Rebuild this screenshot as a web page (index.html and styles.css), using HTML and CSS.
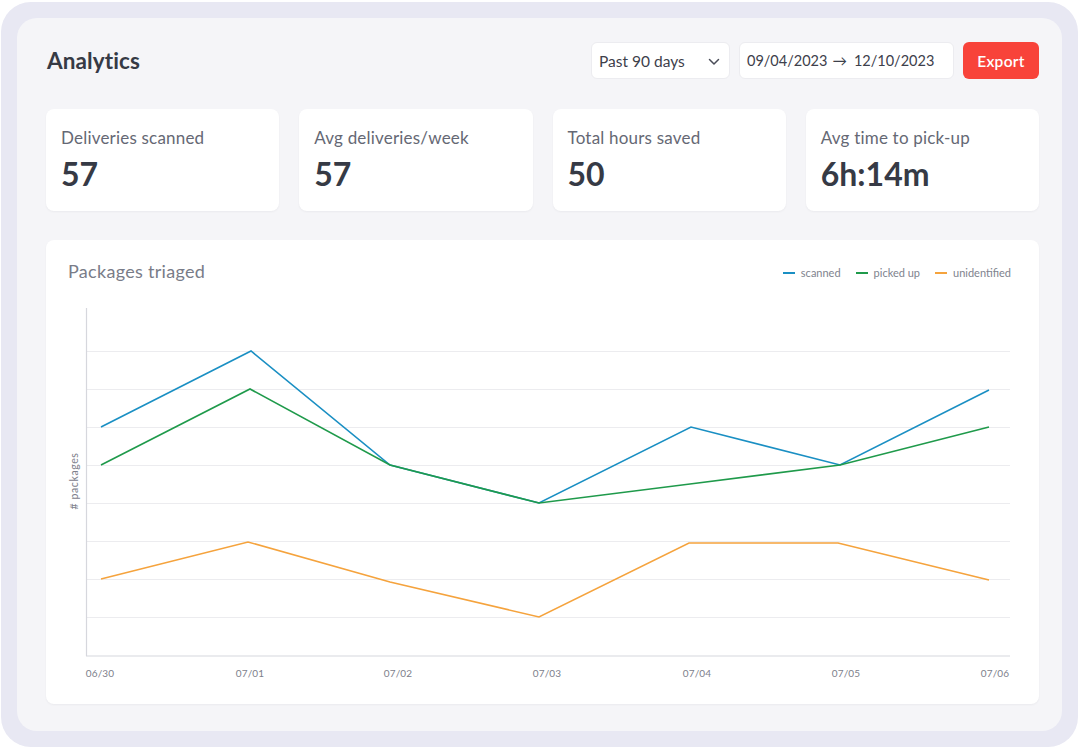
FILE: index.html
```html
<!DOCTYPE html>
<html lang="en">
<head>
<meta charset="utf-8">
<title>Analytics</title>
<link rel="stylesheet" href="styles.css">
</head>
<body>
<div class="frame">
  <div class="panel">
    <header class="top">
      <h1 class="title">Analytics</h1>
      <div class="controls">
        <div class="select">
          <span>Past 90 days</span>
          <svg class="chev" width="12" height="8" viewBox="0 0 12 8"><path d="M1.5 1.5 L6 6 L10.5 1.5" fill="none" stroke="#4a4d58" stroke-width="1.5" stroke-linecap="round" stroke-linejoin="round"/></svg>
        </div>
        <div class="range"><span>09/04/2023</span><span class="arrow">→</span><span>12/10/2023</span></div>
        <button class="export">Export</button>
      </div>
    </header>

    <section class="stats">
      <div class="stat"><div class="label">Deliveries scanned</div><div class="value">57</div></div>
      <div class="stat"><div class="label">Avg deliveries/week</div><div class="value">57</div></div>
      <div class="stat"><div class="label">Total hours saved</div><div class="value">50</div></div>
      <div class="stat"><div class="label">Avg time to pick-up</div><div class="value">6h:14m</div></div>
    </section>

    <section class="chart-card">
      <div class="chart-head">
        <h2 class="chart-title">Packages triaged</h2>
        <ul class="legend">
          <li><i class="sw sw-blue"></i>scanned</li>
          <li><i class="sw sw-green"></i>picked up</li>
          <li><i class="sw sw-orange"></i>unidentified</li>
        </ul>
      </div>
      <svg class="plot" width="992" height="400" viewBox="46 295 992 400">
        <g class="grid" stroke="#ececef" stroke-width="1">
          <line x1="86" y1="351.5" x2="1010" y2="351.5"/>
          <line x1="86" y1="389.5" x2="1010" y2="389.5"/>
          <line x1="86" y1="427.5" x2="1010" y2="427.5"/>
          <line x1="86" y1="465.5" x2="1010" y2="465.5"/>
          <line x1="86" y1="503.5" x2="1010" y2="503.5"/>
          <line x1="86" y1="541.5" x2="1010" y2="541.5"/>
          <line x1="86" y1="579.5" x2="1010" y2="579.5"/>
          <line x1="86" y1="617.5" x2="1010" y2="617.5"/>
        </g>
        <g stroke="#d6d7dd" stroke-width="1.2">
          <line x1="86.5" y1="308" x2="86.5" y2="656"/>
          <line x1="86" y1="656" x2="1010" y2="656"/>
        </g>
        <polyline fill="none" stroke="#1a8fc3" stroke-width="1.6" points="101,427 251,351 390,465 539,503 691,427 840,465 989,390"/>
        <polyline fill="none" stroke="#1f9a4b" stroke-width="1.6" points="101,465 250,389 390,465 539,503 690,484 840,465 989,427"/>
        <polyline fill="none" stroke="#f5a33d" stroke-width="1.6" points="101,579 248,542 390,582 539,617 689,543 838,543 989,580"/>
        <text class="ylab" transform="translate(78 481) rotate(-90)" text-anchor="middle"># packages</text>
        <g class="xlab" text-anchor="middle">
          <text x="100" y="677">06/30</text>
          <text x="250" y="677">07/01</text>
          <text x="398" y="677">07/02</text>
          <text x="547" y="677">07/03</text>
          <text x="697" y="677">07/04</text>
          <text x="846" y="677">07/05</text>
          <text x="995" y="677">07/06</text>
        </g>
      </svg>
    </section>
  </div>
</div>
</body>
</html>
```

FILE: styles.css
```css
* { box-sizing: border-box; }
html, body { margin: 0; padding: 0; background: #ffffff; }
body {
  font-family: Lato, "Noto Sans", sans-serif;
  color: #363a45;
  padding: 2px 2px 0 1px;
}
.frame {
  width: 1077px;
  height: 745px;
  background: #e8e8f3;
  border-radius: 30px;
  padding: 16px;
}
.panel {
  height: 713px;
  background: #f5f5f8;
  border-radius: 20px;
  padding: 24px 23px 0 29px;
}
.top {
  display: flex;
  align-items: center;
  justify-content: space-between;
  height: 37px;
}
.title {
  margin: 0;
  font-size: 22.5px;
  font-weight: 700;
  color: #363a45;
  letter-spacing: 0.1px;
  padding-left: 1px;
}
.controls {
  display: flex;
  gap: 9px;
  height: 37px;
}
.select, .range {
  background: #ffffff;
  border: 1px solid #ececf0;
  border-radius: 6px;
  display: flex;
  align-items: center;
  color: #3d404b;
}
.select {
  width: 139px;
  font-size: 15.5px;
  padding: 0 9px 0 7px;
  justify-content: space-between;
}
.chev { margin-top: 2px; }
.range {
  width: 215px;
  font-size: 14.5px;
  padding: 0 7px;
}
.arrow { margin: 0 7px 0 5px; }
.export {
  width: 76px;
  border: none;
  border-radius: 6px;
  background: #f8433a;
  color: #ffffff;
  font-family: inherit;
  font-size: 15.5px;
  font-weight: 600;
  letter-spacing: 0.3px;
  padding: 0;
}
.stats {
  margin-top: 30px;
  display: grid;
  grid-template-columns: repeat(4, 1fr);
  gap: 20px;
}
.stat {
  height: 102px;
  background: #ffffff;
  border-radius: 8px;
  box-shadow: 0 1px 2px rgba(30, 30, 60, 0.05);
  padding: 19px 14px 0 15px;
}
.label {
  font-size: 17px;
  letter-spacing: 0.2px;
  color: #656874;
  line-height: 20px;
}
.value {
  margin-top: 7px;
  font-size: 32px;
  font-weight: 700;
  color: #363a45;
  line-height: 38px;
}
.chart-card {
  margin-top: 29px;
  height: 464px;
  background: #ffffff;
  border-radius: 8px;
  box-shadow: 0 1px 2px rgba(30, 30, 60, 0.05);
  overflow: hidden;
}
.chart-head {
  display: flex;
  justify-content: space-between;
  align-items: center;
  padding: 20px 28px 0 22px;
  height: 55px;
}
.chart-title {
  margin: 0;
  font-size: 18px;
  letter-spacing: 0.3px;
  font-weight: 400;
  color: #797c88;
  align-self: flex-start;
}
.legend {
  list-style: none;
  margin: 0;
  padding: 0;
  display: flex;
  gap: 15px;
  font-size: 11px;
  color: #80838e;
  align-self: flex-start;
  margin-top: 6px;
}
.legend li { display: flex; align-items: center; }
.sw {
  display: inline-block;
  width: 12px;
  height: 2px;
  margin-right: 6px;
}
.sw-blue { background: #1a8fc3; }
.sw-green { background: #1f9a4b; }
.sw-orange { background: #f5a33d; }
.plot { display: block; }
.xlab text {
  font-family: Lato, "Noto Sans", sans-serif;
  font-size: 10px;
  letter-spacing: 0.2px;
  fill: #7d808b;
}
.ylab {
  font-family: Lato, "Noto Sans", sans-serif;
  font-size: 10.5px;
  letter-spacing: 0.6px;
  fill: #7d808b;
}
```
